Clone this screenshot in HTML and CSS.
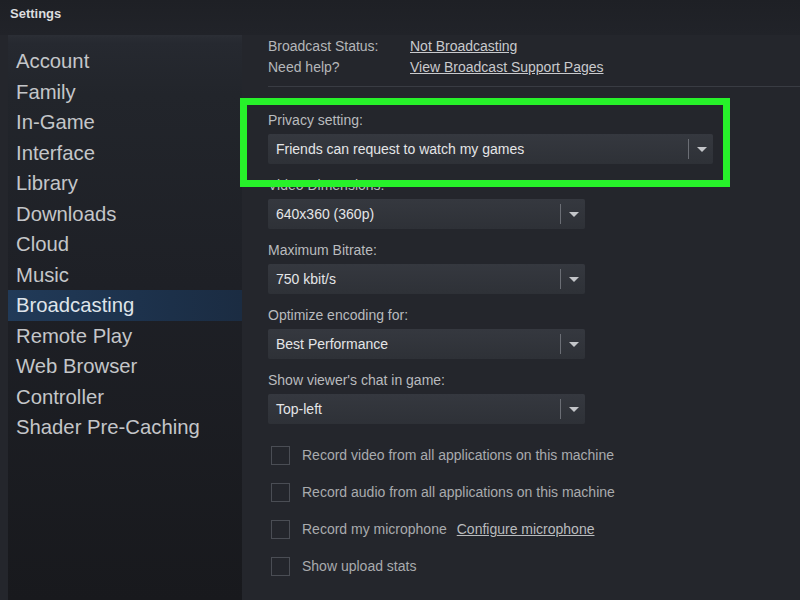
FILE: index.html
```html
<!DOCTYPE html>
<html lang="en">
<head>
<meta charset="utf-8">
<title>Settings</title>
<link rel="stylesheet" href="styles.css">
</head>
<body>
<div class="window">
  <header class="titlebar">Settings</header>
  <div class="body">
    <nav class="sidebar">
      <div class="nav-item">Account</div>
      <div class="nav-item">Family</div>
      <div class="nav-item">In-Game</div>
      <div class="nav-item">Interface</div>
      <div class="nav-item">Library</div>
      <div class="nav-item">Downloads</div>
      <div class="nav-item">Cloud</div>
      <div class="nav-item">Music</div>
      <div class="nav-item active">Broadcasting</div>
      <div class="nav-item">Remote Play</div>
      <div class="nav-item">Web Browser</div>
      <div class="nav-item">Controller</div>
      <div class="nav-item">Shader Pre-Caching</div>
    </nav>
    <main class="content">
      <div class="status">
        <div class="status-row"><span class="status-key">Broadcast Status:</span><a class="link">Not Broadcasting</a></div>
        <div class="status-row"><span class="status-key">Need help?</span><a class="link">View Broadcast Support Pages</a></div>
      </div>
      <div class="divider"></div>
      <div class="field highlight">
        <div class="label">Privacy setting:</div>
        <div class="select wide"><span class="select-text">Friends can request to watch my games</span><span class="select-btn"><span class="arrow"></span></span></div>
      </div>
      <div class="field">
        <div class="label">Video Dimensions:</div>
        <div class="select"><span class="select-text">640x360 (360p)</span><span class="select-btn"><span class="arrow"></span></span></div>
      </div>
      <div class="field">
        <div class="label">Maximum Bitrate:</div>
        <div class="select"><span class="select-text">750 kbit/s</span><span class="select-btn"><span class="arrow"></span></span></div>
      </div>
      <div class="field">
        <div class="label">Optimize encoding for:</div>
        <div class="select"><span class="select-text">Best Performance</span><span class="select-btn"><span class="arrow"></span></span></div>
      </div>
      <div class="field">
        <div class="label">Show viewer's chat in game:</div>
        <div class="select"><span class="select-text">Top-left</span><span class="select-btn"><span class="arrow"></span></span></div>
      </div>
      <div class="checks">
        <label class="check"><span class="box"></span><span>Record video from all applications on this machine</span></label>
        <label class="check"><span class="box"></span><span>Record audio from all applications on this machine</span></label>
        <label class="check"><span class="box"></span><span>Record my microphone</span><a class="link mic">Configure microphone</a></label>
        <label class="check"><span class="box"></span><span>Show upload stats</span></label>
      </div>
    </main>
  </div>
</div>
</body>
</html>
```
FILE: styles.css
```css
*, *::before, *::after { box-sizing: border-box; }
html, body { margin: 0; padding: 0; }
body {
  width: 800px;
  height: 600px;
  overflow: hidden;
  background: #23252b;
  font-family: "Liberation Sans", Arial, sans-serif;
  color: #b6b8bb;
}
.window { display: flex; flex-direction: column; height: 600px; }
.titlebar {
  height: 35px;
  padding: 6px 0 0 10px;
  font-size: 13px;
  font-weight: bold;
  color: #dcdddf;
  background: linear-gradient(#1e2025, #212329);
  flex: none;
}
.body { display: flex; flex: 1; min-height: 0; background: #24262c; }
.sidebar {
  width: 234px;
  margin-left: 8px;
  padding-top: 11px;
  flex: none;
  background: linear-gradient(#2b2e35 0px, #262930 8px, #22252b 60px, #1e2026 250px, #18191d 100%);
}
.nav-item {
  font-size: 20.3px;
  line-height: 30.5px;
  height: 30.5px;
  padding-left: 8px;
  color: #c4c6c9;
  white-space: nowrap;
}
.nav-item.active {
  background: linear-gradient(90deg, #213a58, #1c3049 70%, #1b2c42);
  color: #dfe4ea;
}
.content {
  flex: 1;
  padding: 1px 0 0 26px;
  position: relative;
}
.status-row {
  display: flex;
  height: 21px;
  line-height: 21px;
  font-size: 14px;
}
.status-key { width: 142px; color: #b4b6b9; }
.link {
  color: #c9cacd;
  text-decoration: underline;
  cursor: pointer;
}
.divider {
  height: 1px;
  background: #393c43;
  margin: 8px 0 25px 0;
}
.field { margin-bottom: 13px; position: relative; }
.label {
  font-size: 14px;
  line-height: 16px;
  height: 16px;
  margin-bottom: 6px;
  color: #b9bbbe;
  white-space: nowrap;
}
.select {
  width: 317px;
  height: 30px;
  display: flex;
  align-items: center;
  background: linear-gradient(#35383f, #2e3137);
  border-radius: 2px;
  font-size: 14px;
  color: #e4e5e7;
}
.select.wide { width: 445px; }
.select-text { flex: 1; padding-left: 8px; white-space: nowrap; }
.select-btn {
  width: 25px;
  height: 20px;
  border-left: 1px solid #6b6e75;
  display: flex;
  align-items: center;
  justify-content: center;
}
.arrow {
  width: 0;
  height: 0;
  border-left: 5px solid transparent;
  border-right: 5px solid transparent;
  border-top: 5px solid #c3c5c9;
  margin-left: 1px;
}
.highlight::before {
  content: "";
  position: absolute;
  left: -28px;
  top: -14px;
  width: 490px;
  height: 89px;
  border: 7px solid #27f12a;
  z-index: 2;
  pointer-events: none;
}
.checks {
  margin-top: 21px;
  display: flex;
  flex-direction: column;
  gap: 17px;
}
.check {
  display: flex;
  align-items: center;
  height: 20px;
  font-size: 14px;
  color: #a9abae;
  white-space: nowrap;
}
.box {
  width: 19px;
  height: 19px;
  border: 1px solid #4a4d54;
  margin-left: 3px;
  margin-right: 12px;
  flex: none;
}
.mic { margin-left: 10px; color: #b9bbbe; }
```
